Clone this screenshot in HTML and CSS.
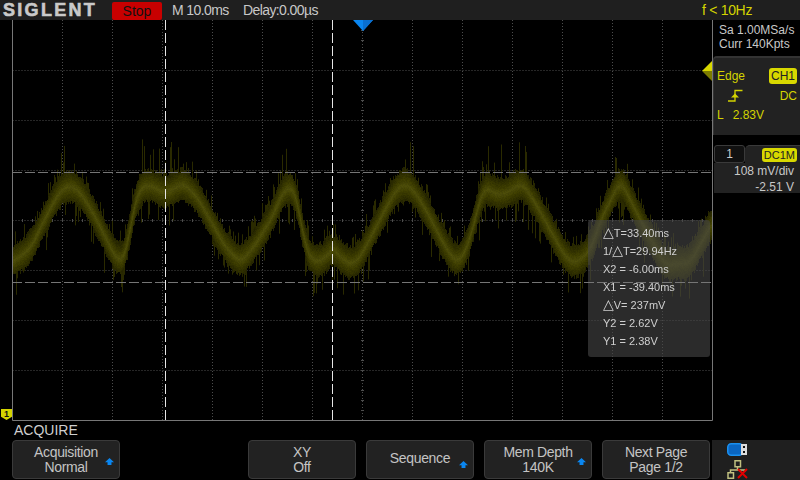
FILE: index.html
```html
<!DOCTYPE html>
<html lang="en">
<head>
<meta charset="utf-8">
<title>SIGLENT oscilloscope</title>
<link rel="stylesheet" href="styles.css">
</head>
<body>
<div class="app">
  <header class="topbar">
    <div class="logo">SIGLENT</div>
    <div class="stop">Stop</div>
    <div class="timebase">M 10.0ms</div>
    <div class="delay">Delay:0.00µs</div>
    <div class="freq">f &lt; 10Hz</div>
  </header>
  <main class="main">
    <div class="scope">
      <div class="plot">
        <svg class="layer" width="701" height="401" viewBox="0 0 701 401">
          <path class="grid" d="M50 0V400M100 0V400M150 0V400M200 0V400M250 0V400M300 0V400M350 0V400M400 0V400M450 0V400M500 0V400M550 0V400M600 0V400M650 0V400"/>
          <path class="grid" d="M0 50.500H700M0 100.500H700M0 150.500H700M0 200.500H700M0 250.500H700M0 300.500H700M0 350.500H700"/>
          <path class="ticks" d="M350.500 10V400M10 200.500H700"/>
        </svg>
        <canvas class="layer" id="wave" width="701" height="401"></canvas>
        <div class="readout">
          <div class="read-line"><span class="tri">△</span>T=33.40ms</div>
          <div class="read-line">1/<span class="tri">△</span>T=29.94Hz</div>
          <div class="read-line">X2 = -6.00ms</div>
          <div class="read-line">X1 = -39.40ms</div>
          <div class="read-line"><span class="tri">△</span>V= 237mV</div>
          <div class="read-line">Y2 = 2.62V</div>
          <div class="read-line">Y1 = 2.38V</div>
        </div>
        <svg class="layer" width="701" height="401" viewBox="0 0 701 401">
          <path class="cursor-h" d="M0 152.500H700M0 262.500H700"/>
          <path class="cursor-v" d="M153.500 0V400M320.500 0V400"/>
          <path class="frame" d="M.5 0V400.500H700.500V0"/>
        </svg>
        <svg class="time-marker" width="20" height="11" viewBox="0 0 20 11"><path fill="#0a86f0" d="M0 0h20L10 11z"/><path fill="#0a6fd0" d="M10 0h10L10 11z"/></svg>
        <svg class="trig-marker" width="10" height="20" viewBox="0 0 10 20"><path fill="#d8d800" d="M10 0v10H0z"/><path fill="#7c7c00" d="M10 20V10H0z"/></svg>
        <div class="gnd-marker">1</div>
      </div>
    </div>
    <aside class="side">
      <div class="info">
        <div>Sa 1.00MSa/s</div>
        <div>Curr 140Kpts</div>
      </div>
      <div class="trigger">
        <div class="trig-row">
          <span>Edge</span>
          <span class="badge">CH1</span>
        </div>
        <div class="trig-row trig-mid">
          <svg class="edge-icon" width="15" height="14" viewBox="0 0 15 14"><path class="edge-line" d="M0 12H7V1.500H14.500"/><path class="edge-arrow" d="M3 8.500L7 4.500l4 4z"/></svg>
          <span>DC</span>
        </div>
        <div class="trig-level"><span>L</span><span>2.83V</span></div>
      </div>
      <div class="channel">
        <div class="chan-head">
          <div class="chan-tab">1</div>
          <div class="chan-coupling"><span class="badge badge-small">DC1M</span></div>
        </div>
        <div class="chan-body">
          <div>108 mV/div</div>
          <div>-2.51 V</div>
        </div>
      </div>
    </aside>
  </main>
  <div class="menu-title">ACQUIRE</div>
  <footer class="softkeys">
    <div class="key key-arrow">Acquisition<br>Normal</div>
    <div class="key-empty"></div>
    <div class="key">XY<br>Off</div>
    <div class="key key-arrow key-single">Sequence</div>
    <div class="key key-arrow">Mem Depth<br>140K</div>
    <div class="key">Next Page<br>Page 1/2</div>
    <div class="status">
      <svg width="20" height="13" viewBox="0 0 20 13"><rect x=".75" y=".75" width="15" height="11.500" rx="3.500" fill="#0a66c2" stroke="#1a90f0" stroke-width="1.500"/><rect x="14" y="1" width="6" height="11" fill="#dcdcdc"/><rect x="16" y="3" width="2" height="2" fill="#111"/><rect x="16" y="8" width="2" height="2" fill="#111"/></svg>
      <svg width="22" height="19" viewBox="0 0 22 19"><path fill="none" stroke="#c0c080" stroke-width="1.500" d="M8 .75h5.500v6H8zM1 12.750h5.500v5.500H1zM10.500 7v3M3.500 12.500V10h14v2"/><path fill="none" stroke="#e00000" stroke-width="2" d="M11 9l9 9M20 9l-9 9"/></svg>
    </div>
  </footer>
</div>
<script src="wave.js"></script>
</body>
</html>
```
FILE: styles.css
```css
* { box-sizing: border-box; }
html, body { margin: 0; padding: 0; background: #000; }
body { font-family: "Liberation Sans", Arial, "DejaVu Sans", sans-serif; color: #c8c8c8; }
.app { width: 800px; height: 480px; display: flex; flex-direction: column; overflow: hidden; background: #000; }

.topbar { height: 20px; flex: none; display: flex; align-items: center; background: #1f1f1f; font-size: 14px; }
.logo { width: 112px; padding-left: 3px; font-size: 18px; font-weight: 700; letter-spacing: 2.300px; color: #c9c9c9; -webkit-text-stroke: .6px #c9c9c9; }
.stop { width: 50px; height: 18px; margin-top: 1px; background: #c80000; border-radius: 2px; color: #111; line-height: 18px; text-align: center; }
.timebase { width: 71px; margin-left: 10px; letter-spacing: -.6px; }
.delay { width: 459px; letter-spacing: -.6px; }
.freq { color: #d4d400; font-size: 14px; letter-spacing: -.3px; }

.main { height: 401px; flex: none; display: flex; }
.scope { width: 713px; flex: none; padding-left: 12px; }
.plot { position: relative; width: 701px; height: 401px; }
.layer { position: absolute; left: 0; top: 0; display: block; }
.grid { fill: none; stroke: #4c4c4c; stroke-width: 1; stroke-dasharray: 1 2; transform: translateX(.5px); }
.ticks { fill: none; stroke: #4c4c4c; stroke-width: 3; stroke-dasharray: 1 9; }
.cursor-h { fill: none; stroke: #757575; stroke-width: 1; stroke-dasharray: 10 3; }
.cursor-v { fill: none; stroke: #e6e6e6; stroke-width: 1; stroke-dasharray: 10 3; }
.frame { fill: none; stroke: #777; stroke-width: 1; }

.readout { position: absolute; left: 576px; top: 200px; width: 122px; height: 137px; padding: 4px 0 0 15px; background: rgba(72, 72, 72, .6); border-radius: 3px; font-size: 11px; color: #cfcfcf; white-space: nowrap; }
.read-line { height: 18px; line-height: 18px; }
.tri { font-family: "DejaVu Sans", sans-serif; font-size: 14px; line-height: 0; }

.time-marker { position: absolute; left: 341px; top: 0; }
.trig-marker { position: absolute; left: 690px; top: 41px; }
.gnd-marker { position: absolute; left: -11px; top: 389px; width: 11px; height: 11px; background: #d4d400; clip-path: polygon(0 0, 100% 0, 100% 70%, 50% 100%, 0 70%); color: #111; font-size: 9px; font-weight: 700; line-height: 10px; text-align: center; }

.side { flex: 1; display: flex; flex-direction: column; }
.info { height: 36px; padding: 3px 0 0 6px; font-size: 12px; line-height: 14px; white-space: nowrap; }
.trigger { height: 79px; background: #222; border-top: 2px solid #333; border-left: 1px solid #333; border-radius: 4px 0 0 0; padding: 9px 3px 0 3px; color: #d4d400; font-size: 12px; }
.trig-row { display: flex; justify-content: space-between; align-items: center; height: 18px; }
.trig-mid { margin-top: 1px; padding-left: 11px; height: 20px; }
.edge-icon { display: block; }
.edge-line { fill: none; stroke: #d4d400; stroke-width: 1.300; }
.edge-arrow { fill: #d4d400; }
.trig-level { display: flex; gap: 9px; margin-top: 2px; line-height: 14px; }
.badge { background: #d8d800; color: #222; border-radius: 3px; padding: 0 2px; height: 16px; line-height: 16px; display: inline-block; font-size: 12px; }
.badge-small { height: 14px; line-height: 14px; font-size: 11px; }

.channel { margin-top: 10px; padding-left: 1px; }
.chan-head { display: flex; height: 18px; }
.chan-tab { width: 31px; background: #111; border: 1px solid #3a3a3a; border-radius: 3px; text-align: center; font-size: 12px; line-height: 16px; color: #ccc; }
.chan-coupling { flex: 1; background: #222; border-top: 1px solid #3a3a3a; border-radius: 5px 0 0 0; display: flex; justify-content: flex-end; align-items: center; padding: 0 3px 0 0; }
.chan-body { height: 30px; background: #222; text-align: right; padding: 0 6px 0 0; font-size: 12px; line-height: 16px; }

.menu-title { height: 19px; flex: none; padding-left: 14px; font-size: 14px; line-height: 19px; color: #cfcfcf; }
.softkeys { height: 40px; flex: none; display: flex; gap: 10px; padding-left: 12px; }
.key { position: relative; width: 108px; height: 39px; background: #222; border: 1px solid #3a3a3a; border-radius: 4px; font-size: 14px; line-height: 15px; letter-spacing: -.35px; display: flex; align-items: center; justify-content: center; text-align: center; color: #c4c4c4; }
.key-single { padding-bottom: 3px; }
.key-empty { width: 108px; }
.key-arrow::after { content: ""; position: absolute; right: 5px; bottom: 13px; width: 9px; height: 7px; background: #0a86f0; clip-path: polygon(50% 0, 100% 60%, 72% 60%, 72% 100%, 28% 100%, 28% 60%, 0 60%); }
.key-single::after { bottom: 10px; }
.status { margin-left: -8px; flex: 1; background: #1f1f1f; display: flex; flex-direction: column; align-items: flex-start; gap: 4px; padding: 3px 0 0 15px; }
.status svg { display: block; }
```
FILE: wave.js
```js
(function () {
  var pts = [[0,262],[18,248],[33,217],[48,190],[58,185],[68,192],[83,217],[98,247],[106,262],[114,253],[121,207],[128,187],[138,185],[153,193],[171,183],[185,197],[198,220],[213,247],[228,262],[241,247],[258,220],[273,187],[283,190],[288,220],[293,247],[301,262],[313,258],[320,247],[333,262],[343,263],[353,247],[368,218],[383,190],[393,183],[403,192],[418,218],[433,247],[445,263],[455,247],[463,217],[471,187],[488,195],[498,190],[510,183],[523,203],[538,230],[553,257],[563,263],[578,250],[588,220],[608,180],[628,220],[653,265],[678,262],[700,222]];
  var seed = 12345;
  function rnd() { seed = (seed * 1664525 + 1013904223) >>> 0; return seed / 4294967296; }
  function raw(x) {
    if (x <= 0) return pts[0][1] - 20;
    for (var i = 1; i < pts.length; i++) {
      if (x <= pts[i][0]) {
        var a = pts[i - 1], b = pts[i];
        return a[1] + (b[1] - a[1]) * (x - a[0]) / (b[0] - a[0]) - 20;
      }
    }
    return pts[pts.length - 1][1] - 20;
  }
  function centre(x) {
    var sum = 0;
    for (var k = -5; k <= 5; k++) sum += raw(x + k);
    return sum / 11;
  }
  var ctx = document.getElementById('wave').getContext('2d');
  for (var x = 1; x < 700; x++) {
    var c = centre(x);
    var up = 13 + rnd() * 5, down = 13 + rnd() * 5;
    var top = c - up, bot = c + down;
    for (var y = Math.floor(top); y <= bot; y++) {
      var d = Math.abs(y - c) / 16;
      if (d > 1) d = 1;
      var v = 76 - 40 * Math.pow(d, .9);
      var vv = Math.round(v + (rnd() - .5) * 10);
      ctx.fillStyle = 'rgb(' + vv + ',' + vv + ',' + Math.round(Math.max(0, v - 60) * .6) + ')';
      ctx.fillRect(x, y, 1, 1);
    }
    if (rnd() < .45) {
      var isPeak = c < 175;
      var lenU = 2 + rnd() * (isPeak ? 34 : 12), lenD = 2 + rnd() * (isPeak ? 22 : 20);
      ctx.fillStyle = 'rgb(42,42,0)';
      if (rnd() < .55) ctx.fillRect(x, top - lenU, 1, lenU);
      else ctx.fillRect(x, bot, 1, lenD);
    }
  }
})();
```
